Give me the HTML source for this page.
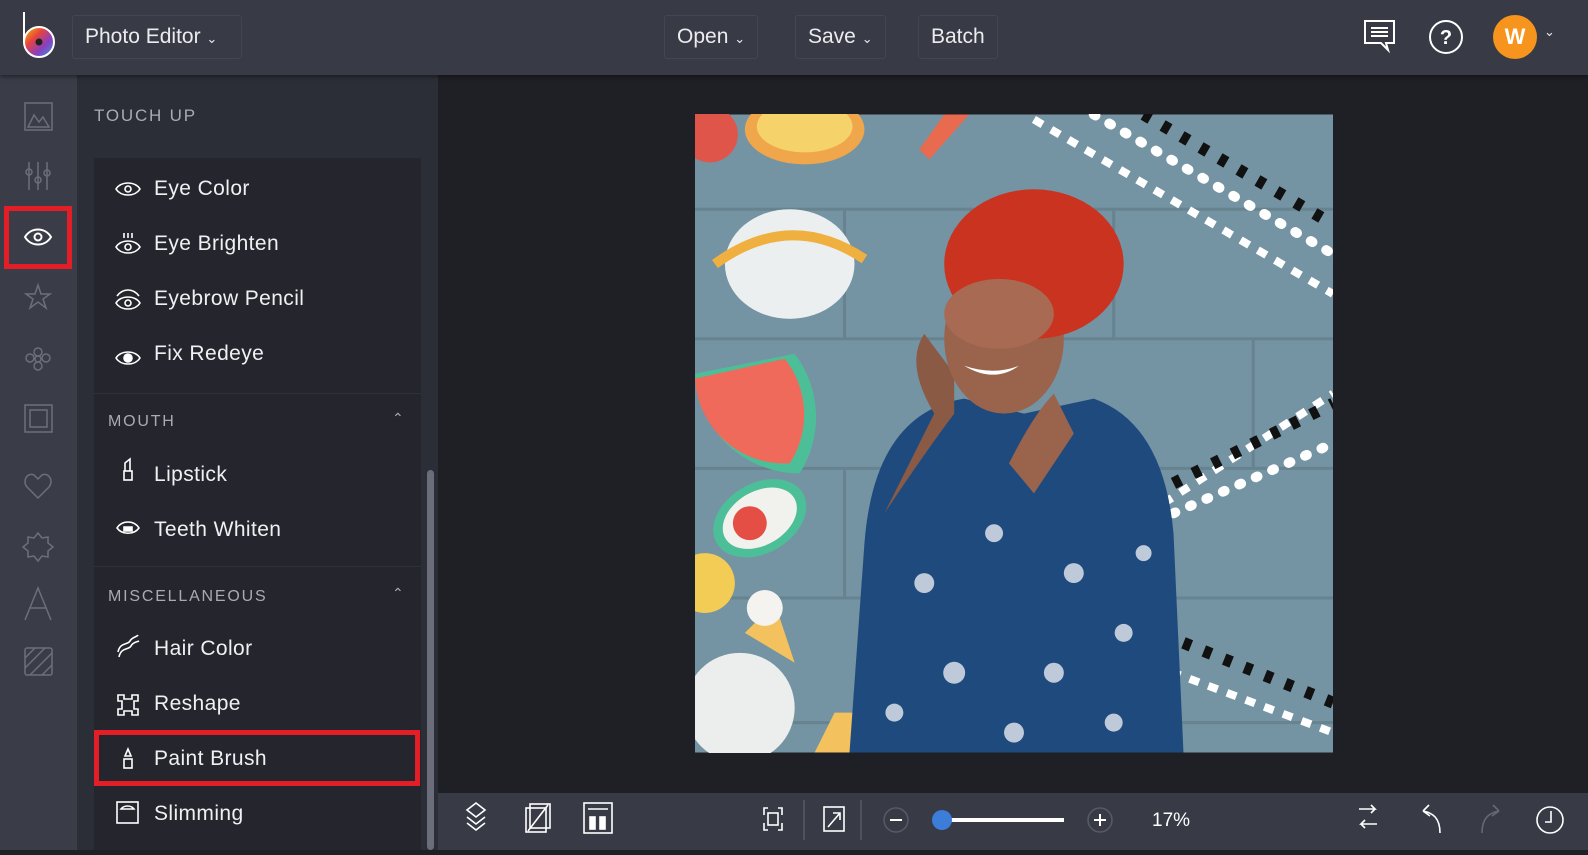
<!DOCTYPE html>
<html><head><meta charset="utf-8"><style>
*{margin:0;padding:0;box-sizing:border-box}
body{width:1588px;height:850px;overflow:hidden;background:#1f2026;font-family:"Liberation Sans",sans-serif;color:#e8e8ea;position:relative}
.top{position:absolute;left:0;top:0;width:1588px;height:75px;background:#383a45;box-shadow:0 2px 4px rgba(0,0,0,.4);z-index:3}
.btn{position:absolute;top:15px;height:44px;border:1px solid #43454f;border-radius:3px;font-size:21px;line-height:42px;padding:0 12px;color:#ececee}
.side{position:absolute;left:0;top:75px;width:77px;height:775px;background:#3a3d48}
.panel{position:absolute;left:77px;top:75px;width:361px;height:775px;background:#2c2e37}
.list{position:absolute;left:94px;top:158px;width:327px;height:692px;background:#24252d}
.it{position:absolute;left:154px;font-size:21px;letter-spacing:0.4px;color:#f0f0f2}
.hd{position:absolute;font-size:16px;letter-spacing:1.8px;color:#a9abb3}
.ic{position:absolute}
.bot{position:absolute;left:438px;top:793px;width:1150px;height:57px;background:#383a45}
</style></head><body>
<div class="top">
 <svg class="ic" style="left:20px;top:12px" width="38" height="48" viewBox="0 0 38 48">
  <defs><linearGradient id="g" x1="0" y1="0" x2="1" y2="1"><stop offset="0" stop-color="#f2c500"/><stop offset=".35" stop-color="#e8433d"/><stop offset=".65" stop-color="#8a3fbf"/><stop offset="1" stop-color="#2f9be0"/></linearGradient></defs>
  <circle cx="19" cy="30" r="15" fill="url(#g)"/><circle cx="19" cy="30" r="15" fill="none" stroke="#fff" stroke-width="2"/>
  <path d="M4 0V30" stroke="#fff" stroke-width="2"/><circle cx="19" cy="30" r="3.5" fill="#222"/></svg>
 <div class="btn" style="left:72px;width:170px">Photo Editor <span style="font-size:13px">&#8964;</span></div>
 <div class="btn" style="left:664px">Open <span style="font-size:13px">&#8964;</span></div>
 <div class="btn" style="left:795px">Save <span style="font-size:13px">&#8964;</span></div>
 <div class="btn" style="left:918px">Batch</div>
 <svg class="ic" style="left:1362px;top:18px" width="36" height="36" viewBox="0 0 36 36"><path d="M3 3H32V25H24L26 32L19 25H3Z" fill="none" stroke="#fff" stroke-width="2"/><path d="M9 10H26M9 14H26M9 18H26" stroke="#fff" stroke-width="2"/></svg>
 <svg class="ic" style="left:1428px;top:19px" width="36" height="36" viewBox="0 0 36 36"><circle cx="18" cy="18" r="16" fill="none" stroke="#fff" stroke-width="2"/><text x="18" y="25" text-anchor="middle" font-size="20" font-weight="bold" fill="#fff" font-family="Liberation Sans">?</text></svg>
 <div style="position:absolute;left:1493px;top:15px;width:44px;height:44px;border-radius:50%;background:#f7941d;color:#fff;font-weight:bold;font-size:22px;text-align:center;line-height:44px">W</div>
 <div style="position:absolute;left:1544px;top:24px;font-size:13px">&#8964;</div>
</div>
<div class="side">
 <svg width="77" height="775" viewBox="0 75 77 775" style="position:absolute;left:0;top:0" fill="none" stroke="#6c6f7b" stroke-width="1.5">
  <rect x="25" y="103" width="27" height="27"/><path d="M28 127L34 115L39 122L43 117L49 127Z"/>
  <path d="M29 162V190M38 162V190M47 162V190"/><circle cx="29" cy="172" r="3"/><circle cx="38" cy="180" r="3"/><circle cx="47" cy="173" r="3"/>
  <path d="M38 285L41 294H50L43 299L46 308L38 302L30 308L33 299L26 294H35Z"/>
  <circle cx="38" cy="352" r="4"/><circle cx="30" cy="358" r="4"/><circle cx="46" cy="358" r="4"/><circle cx="38" cy="366" r="4"/><circle cx="38" cy="359" r="3"/>
  <rect x="25" y="405" width="27" height="27"/><rect x="30" y="410" width="17" height="17"/>
  <path d="M38 498L27 487C22 481 27 472 34 475L38 479L42 475C49 472 54 481 49 487Z"/>
  <path d="M38 533L42 538L48 537L48 543L53 547L48 551L48 557L42 556L38 561L34 556L28 557L28 551L23 547L28 543L28 537L34 538Z"/>
  <path d="M25 620L38 588L51 620M30 608H46"/>
  <rect x="25" y="648" width="27" height="27" rx="2"/><path d="M25 668L45 648M30 675L52 653M25 658L35 648M42 675L52 665"/>
 </svg>
 <div style="position:absolute;left:4px;top:131px;width:68px;height:63px;border:5px solid #e41e26"></div>
 <svg class="ic" style="left:23px;top:150px" width="30" height="24" viewBox="0 0 30 24"><path d="M2 12C8 2 22 2 28 12C22 22 8 22 2 12Z" fill="none" stroke="#fff" stroke-width="2"/><circle cx="15" cy="12" r="3.5" fill="none" stroke="#fff" stroke-width="2"/></svg>
</div>
<div class="panel">
 <div class="hd" style="left:17px;top:31px;font-size:17px">TOUCH UP</div>
</div>
<div class="list">
 <div style="position:absolute;left:0;top:235px;width:327px;border-top:1px solid #30323b"></div>
 <div style="position:absolute;left:0;top:408px;width:327px;border-top:1px solid #30323b"></div>
 <div class="hd" style="left:14px;top:255px">MOUTH</div><div class="hd" style="left:298px;top:252px;font-size:14px">&#8963;</div>
 <div class="hd" style="left:14px;top:430px">MISCELLANEOUS</div><div class="hd" style="left:298px;top:427px;font-size:14px">&#8963;</div>
 <div style="position:absolute;left:0;top:572px;width:326px;height:56px;border:5px solid #e41e26"></div>
</div>
<div style="position:absolute;left:427px;top:470px;width:7px;height:380px;border-radius:4px;background:#6b6e7a"></div>
<svg class="ic" style="left:114px;top:175px" width="28" height="650" viewBox="0 0 28 650" fill="none" stroke="#fff" stroke-width="1.6">
 <path d="M2 14C7 6 21 6 26 14C21 22 7 22 2 14Z"/><circle cx="14" cy="14" r="3"/>
 <path d="M2 72C7 64 21 64 26 72C21 80 7 80 2 72Z"/><circle cx="14" cy="72" r="3"/><path d="M10 58V63M14 58V63M18 58V63"/>
 <path d="M2 128C7 120 21 120 26 128C21 136 7 136 2 128Z"/><circle cx="14" cy="128" r="3"/><path d="M3 121C9 113 19 113 25 121"/>
 <path d="M2 183C7 175 21 175 26 183C21 191 7 191 2 183Z"/><circle cx="14" cy="183" r="4" fill="#fff"/>
 <rect x="10" y="296" width="8" height="9"/><path d="M11 296V288L16 284V296"/>
 <path d="M3 353C8 345 20 345 25 353C20 360 8 360 3 353Z"/><path d="M10 352H18V356H10Z" fill="#fff"/>
 <path d="M4 477C6 467 14 470 16 466C18 462 23 462 24 460M5 482C7 472 15 475 17 471C19 467 23 467 25 466"/>
 <path d="M4 520H10V524H18V520H24V526H20V534H24V540H18V536H10V540H4V534H8V526H4Z"/>
 <path d="M14 574L11 581H17Z"/><rect x="10" y="584" width="8" height="9"/>
 <rect x="3" y="627" width="21" height="21"/><path d="M7 634C10 630 17 630 20 634H7Z"/>
</svg>
<div class="it" style="top:177px">Eye Color</div>
<div class="it" style="top:232px">Eye Brighten</div>
<div class="it" style="top:287px">Eyebrow Pencil</div>
<div class="it" style="top:342px">Fix Redeye</div>
<div class="it" style="top:463px">Lipstick</div>
<div class="it" style="top:518px">Teeth Whiten</div>
<div class="it" style="top:637px">Hair Color</div>
<div class="it" style="top:692px">Reshape</div>
<div class="it" style="top:747px">Paint Brush</div>
<div class="it" style="top:802px">Slimming</div>

<svg style="position:absolute;left:695px;top:114px" width="638" height="639" viewBox="0 0 640 640">
 <rect width="640" height="640" fill="#7493a3"/>
 <g stroke="#66838f" stroke-width="3"><path d="M0 95H640M0 225H640M0 355H640M0 485H640M0 610H640M150 95V225M420 95V225M280 225V355M560 225V355M150 355V485M420 355V485M280 485V610"/></g>
 <circle cx="15" cy="20" r="28" fill="#e0554a"/>
 <ellipse cx="110" cy="15" rx="60" ry="35" fill="#f0a64a"/><ellipse cx="110" cy="12" rx="48" ry="26" fill="#f5d36a"/>
 <path d="M225 35L250 0H275L235 45Z" fill="#e86b4f"/>
 <ellipse cx="95" cy="150" rx="65" ry="55" fill="#eceff0"/><path d="M20 150Q95 95 170 145" stroke="#f0b040" stroke-width="10" fill="none"/>
 <path d="M0 260A105 105 0 0 0 105 360A105 105 0 0 0 100 240Z" fill="#4cbf98"/><path d="M0 265A90 90 0 0 0 95 350A90 90 0 0 0 90 245Z" fill="#ef6a5a"/>
 <ellipse cx="65" cy="405" rx="50" ry="35" fill="#4cbf98" transform="rotate(-30 65 405)"/><ellipse cx="65" cy="405" rx="40" ry="27" fill="#f1f1ee" transform="rotate(-30 65 405)"/><circle cx="55" cy="410" r="17" fill="#e44e44"/>
 <circle cx="10" cy="470" r="30" fill="#f3cc55"/><path d="M50 520L100 550L80 490Z" fill="#f3c15d"/><circle cx="70" cy="495" r="18" fill="#f4f3ef"/>
 <circle cx="45" cy="595" r="55" fill="#eceeed"/><path d="M120 640L140 600H170L175 640Z" fill="#f3c15d"/>
 <g stroke="#fff" stroke-width="8" stroke-dasharray="10 10" fill="none"><path d="M340 5L640 180"/><path d="M470 390L640 280"/><path d="M440 545L640 620"/></g>
 <g stroke="#111" stroke-width="12" stroke-dasharray="8 14" fill="none"><path d="M450 0L640 110"/><path d="M480 370L640 290"/><path d="M490 530L640 590"/></g>
 <g stroke="#fff" stroke-width="10" stroke-dasharray="2 16" stroke-linecap="round" fill="none"><path d="M400 0L640 140"/><path d="M480 400L640 330"/></g>
 <path d="M155 640L170 430Q180 300 270 285L330 300L400 285Q470 310 480 420L490 640Z" fill="#1f4a7d"/>
 <path d="M190 400Q230 340 260 300L260 260L230 220Q210 250 240 300L200 380Z" fill="#8a5a45"/>
 <ellipse cx="310" cy="225" rx="60" ry="75" fill="#9a644c"/>
 <ellipse cx="340" cy="150" rx="90" ry="75" fill="#c9331f"/><ellipse cx="305" cy="200" rx="55" ry="35" fill="#a86a52"/>
 <path d="M270 252Q300 270 325 252Q300 262 270 252Z" fill="#fff"/>
 <path d="M315 350Q340 300 360 280L380 320L340 380Z" fill="#9a644c"/>
 <g fill="#e6ebf0" opacity=".8"><circle cx="230" cy="470" r="10"/><circle cx="300" cy="420" r="9"/><circle cx="380" cy="460" r="10"/><circle cx="260" cy="560" r="11"/><circle cx="360" cy="560" r="10"/><circle cx="430" cy="520" r="9"/><circle cx="200" cy="600" r="9"/><circle cx="320" cy="620" r="10"/><circle cx="420" cy="610" r="9"/><circle cx="450" cy="440" r="8"/></g>
</svg>

<div class="bot">
 <svg width="1150" height="57" viewBox="0 0 1150 57" fill="none" stroke="#fff" stroke-width="1.6">
  <g transform="translate(11 0)"><path d="M27 10L36 17L27 24L18 17Z"/><path d="M18 24L27 31L36 24M18 30L27 37L36 30"/></g>
  <g transform="translate(7 0)"><rect x="81" y="15" width="20" height="24"/><rect x="85" y="11" width="20" height="24"/><path d="M83 38L103 12"/>
  <rect x="139" y="10" width="28" height="30"/><path d="M143 16H163"/><rect x="145" y="24" width="5" height="12" fill="#fff"/><rect x="155" y="24" width="5" height="12" fill="#fff"/></g>
  <g transform="translate(10 0)"><path d="M320 15H316V22M320 37H316V30M330 15H334V22M330 37H334V30"/><rect x="320" y="20" width="10" height="12"/>
  <path d="M356 7V47" stroke="#555864"/></g>
  <g transform="translate(3 0)"><rect x="383" y="14" width="20" height="24"/><path d="M387 34L399 20M392 20H399V27"/>
  <path d="M420 7V47" stroke="#555864"/></g>
  <circle cx="458" cy="27" r="12" stroke="#565966"/><path d="M452 27H464" stroke-width="2"/>
  <path d="M500 27H626" stroke-width="4"/>
  <circle cx="662" cy="27" r="12" stroke="#565966"/><path d="M656 27H668M662 21V33" stroke-width="2"/>
  <g transform="translate(9 0)"><path d="M912 16H928L924 12M928 16L924 20M930 31H914L918 27M914 31L918 35"/></g>
  <g transform="translate(10 0)"><path d="M992 40C992 25 985 20 975 18M975 18L981 12M975 18L982 23"/>
  <path d="M1034 40C1034 25 1041 20 1051 18M1051 18L1045 12M1051 18L1044 23" stroke="#666975"/></g>
  <circle cx="1112" cy="27" r="13"/><path d="M1113 18V29H1107"/>
 </svg>
 <div style="position:absolute;left:494px;top:17px;width:20px;height:20px;border-radius:50%;background:#3b7dd8"></div>
 <div style="position:absolute;left:714px;top:17px;font-size:19px;color:#fff">17%</div>
</div>
</body></html>
